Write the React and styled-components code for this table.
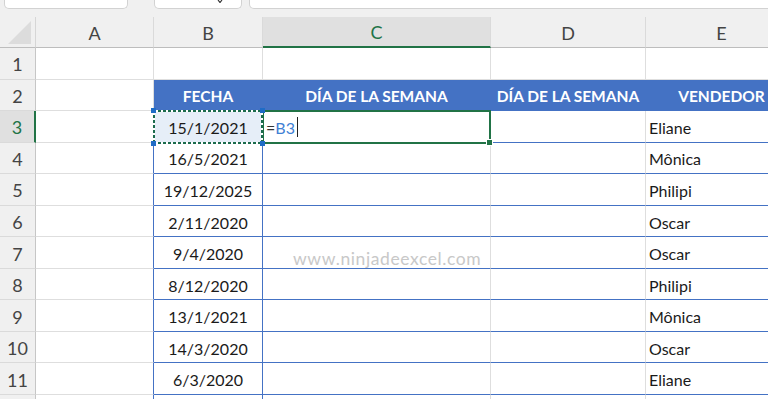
import React from 'react'
import styled, { createGlobalStyle } from 'styled-components'

const BLUE = '#4472c4'
const GRID = '#dedede'
const GREEN = '#217346'

const GlobalStyle = createGlobalStyle`
  html, body {
    margin: 0;
    padding: 0;
    background: #f0f0f0;
  }
  body {
    font-family: Lato, "Liberation Sans", sans-serif;
    overflow: hidden;
  }
`

const Window = styled.div`
  width: 768px;
  height: 399px;
  overflow: hidden;
  background: #f0f0f0;
  display: flex;
  flex-direction: column;
`

const TopBar = styled.div`
  height: 17px;
  flex: none;
  display: flex;
  align-items: flex-start;
  padding-left: 4px;
`

const BarBox = styled.div`
  position: relative;
  box-sizing: border-box;
  height: 9px;
  width: ${(p) => p.$w || 'auto'};
  flex: ${(p) => (p.$grow ? '1' : 'none')};
  margin-left: ${(p) => p.$ml || '0'};
  margin-right: ${(p) => (p.$grow ? '-8px' : '0')};
  background: #fff;
  border: 1px solid #d2d2d2;
  border-top: none;
  border-radius: 0 0 5px 5px;
`

const DropMark = styled.svg`
  position: absolute;
  right: 18px;
  top: 0;
`

const Sheet = styled.div`
  position: relative;
  flex: none;
  width: max-content;
  display: grid;
  grid-template-columns: 36px 118px 109px 228px 155px 152px;
  grid-template-rows: 31px repeat(12, 31.55px);
`

const Corner = styled.div`
  position: relative;
  box-sizing: border-box;
  background: #f0f0f0;
  border-right: 1px solid #d6d6d6;
  border-bottom: 1px solid #bdbdbd;
  &::after {
    content: '';
    position: absolute;
    right: 4px;
    bottom: 3px;
    width: 0;
    height: 0;
    border-left: 23px solid transparent;
    border-bottom: 23px solid #dcdcdc;
  }
`

const ColHeader = styled.div`
  box-sizing: border-box;
  display: flex;
  align-items: center;
  justify-content: center;
  padding-top: 1px;
  background: ${(p) => (p.$active ? '#e0e0e0' : '#f0f0f0')};
  border-right: 1px solid #dadada;
  border-bottom: ${(p) => (p.$active ? `2px solid ${GREEN}` : '1px solid #bdbdbd')};
  color: ${(p) => (p.$active ? GREEN : '#444')};
  font-size: 18px;
`

const RowHeader = styled.div`
  box-sizing: border-box;
  display: flex;
  align-items: center;
  justify-content: center;
  padding-top: 2px;
  background: ${(p) => (p.$active ? '#e0e0e0' : '#f0f0f0')};
  border-right: ${(p) => (p.$active ? `2px solid ${GREEN}` : '1px solid #c6c6c6')};
  border-bottom: 1px solid #dadada;
  color: ${(p) => (p.$active ? GREEN : '#444')};
  font-size: 18px;
`

const Cell = styled.div`
  position: relative;
  box-sizing: border-box;
  display: flex;
  align-items: center;
  justify-content: ${(p) => (p.$center ? 'center' : 'flex-start')};
  padding: 2px 3px 0;
  background: ${(p) => p.$fill || '#fff'};
  border-right: 1px solid ${(p) => (p.$blueRight ? BLUE : GRID)};
  border-bottom: 1px solid ${(p) => (p.$blueBottom ? BLUE : GRID)};
  color: #1a1a1a;
  font-size: 16px;
  white-space: nowrap;
`

const HeadCell = styled(Cell)`
  justify-content: center;
  background: ${BLUE};
  border-right-color: ${BLUE};
  border-bottom-color: ${BLUE};
  color: #fff;
  font-weight: 700;
  font-size: 15.5px;
`

const RefFrame = styled.div`
  position: absolute;
  inset: -1px -1px -2px -1px;
  z-index: 3;
  pointer-events: none;
  background:
    repeating-linear-gradient(90deg, #1c6b4d 0 3px, #fff 3px 5px) top / 100% 2px no-repeat,
    repeating-linear-gradient(90deg, #1c6b4d 0 3px, #fff 3px 5px) bottom / 100% 2px no-repeat,
    repeating-linear-gradient(180deg, #1c6b4d 0 3px, #fff 3px 5px) left / 2px 100% no-repeat,
    repeating-linear-gradient(180deg, #1c6b4d 0 3px, #fff 3px 5px) right / 2px 100% no-repeat;
`

const RefHandle = styled.span`
  position: absolute;
  width: 5px;
  height: 5px;
  background: #1f6cc6;
  ${(p) => (p.$bottom ? 'bottom: -2px;' : 'top: -2px;')}
  ${(p) => (p.$right ? 'right: -2px;' : 'left: -2px;')}
`

const SelectFrame = styled.div`
  position: absolute;
  inset: -1px -1px -2px -1px;
  z-index: 2;
  pointer-events: none;
  border: 2px solid ${GREEN};
`

const FillHandle = styled.span`
  position: absolute;
  right: -4px;
  bottom: -4px;
  width: 5px;
  height: 5px;
  background: ${GREEN};
  border: 1px solid #fff;
`

const Equals = styled.span`
  color: #333;
`

const RefText = styled.span`
  color: #3f80d4;
`

const Caret = styled.span`
  display: inline-block;
  width: 1px;
  height: 20px;
  margin-left: 2px;
  background: #222;
`

const Watermark = styled.div`
  position: absolute;
  left: 293px;
  top: 231px;
  z-index: 4;
  color: #c8c8c8;
  font-size: 17.5px;
  letter-spacing: 0.6px;
  pointer-events: none;
`

const columns = ['A', 'B', 'C', 'D', 'E']

const rows = [
  { date: '15/1/2021', seller: 'Eliane' },
  { date: '16/5/2021', seller: 'Mônica' },
  { date: '19/12/2025', seller: 'Philipi' },
  { date: '2/11/2020', seller: 'Oscar' },
  { date: '9/4/2020', seller: 'Oscar' },
  { date: '8/12/2020', seller: 'Philipi' },
  { date: '13/1/2021', seller: 'Mônica' },
  { date: '14/3/2020', seller: 'Oscar' },
  { date: '6/3/2020', seller: 'Eliane' },
  // row 12 only shows its top edge, so no label
  { date: '', seller: '', hidden: true },
]

const App = () => {
  return (
    <Window>
      <GlobalStyle />
      <TopBar>
        <BarBox $w="124px" />
        <BarBox $w="88px" $ml="26px">
          <DropMark width="6" height="3" viewBox="0 0 6 3">
            <path d="M1 0 L3 2.5 L5 0" stroke="#333" strokeWidth="1.2" fill="none" />
          </DropMark>
        </BarBox>
        <BarBox $grow $ml="7px" />
      </TopBar>

      <Sheet>
        <Corner />
        {columns.map((c) => (
          <ColHeader key={c} $active={c === 'C'}>{c}</ColHeader>
        ))}

        <RowHeader>1</RowHeader>
        {columns.map((c) => (
          <Cell key={`1${c}`} />
        ))}

        <RowHeader>2</RowHeader>
        <Cell />
        <HeadCell>FECHA</HeadCell>
        <HeadCell>DÍA DE LA SEMANA</HeadCell>
        <HeadCell>DÍA DE LA SEMANA</HeadCell>
        <HeadCell>VENDEDOR</HeadCell>

        {rows.map((row, i) => {
          const n = i + 3
          const first = n === 3
          return (
            <React.Fragment key={n}>
              <RowHeader $active={first}>{row.hidden ? '' : n}</RowHeader>
              <Cell $blueRight />
              <Cell $center $blueRight $blueBottom $fill={first ? '#e6eef8' : undefined}>
                {row.date}
                {first && (
                  <RefFrame>
                    <RefHandle />
                    <RefHandle $right />
                    <RefHandle $bottom />
                    <RefHandle $bottom $right />
                  </RefFrame>
                )}
              </Cell>
              <Cell $blueBottom>
                {first && (
                  <>
                    <Equals>=</Equals>
                    <RefText>B3</RefText>
                    <Caret />
                    <SelectFrame>
                      <FillHandle />
                    </SelectFrame>
                  </>
                )}
              </Cell>
              <Cell $blueBottom />
              <Cell $blueBottom>{row.seller}</Cell>
            </React.Fragment>
          )
        })}

        <Watermark>www.ninjadeexcel.com</Watermark>
      </Sheet>
    </Window>
  )
}

export default App
